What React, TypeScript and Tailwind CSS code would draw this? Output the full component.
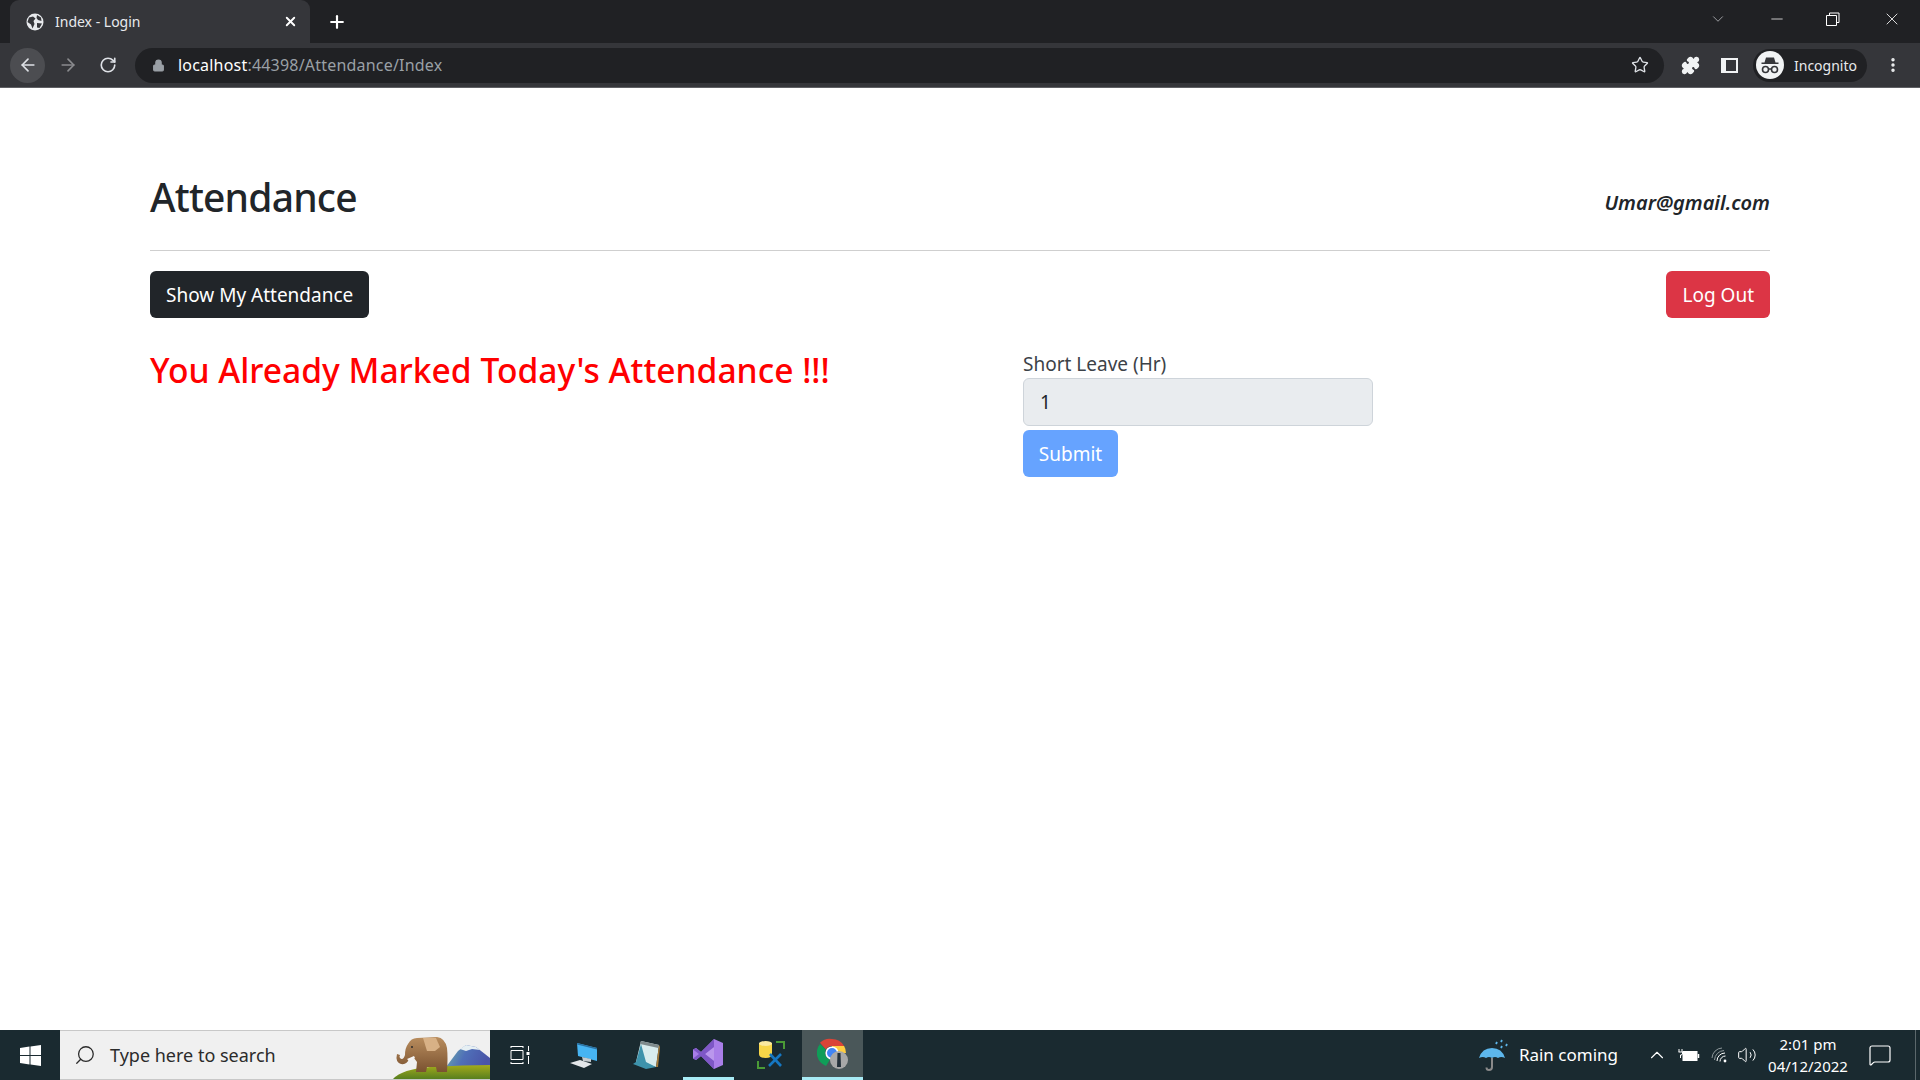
import { ArrowLeft, ArrowRight, ChevronDown, ChevronUp, Lock, Minus, Plus, RotateCw, Search, Star, X, Puzzle, MoreVertical, MessageSquare, Volume2 } from "lucide-react";

const sans = "font-['Noto_Sans','Open_Sans',sans-serif]";

function GlobeIcon() {
  return (
    <svg width="18" height="18" viewBox="0 0 18 18">
      <circle cx="9" cy="9" r="8.5" fill="#e8eaed" />
      <path d="M3 4.5 L7 3.5 L9.5 5.5 L7.5 8 L8.5 11 L6.5 15.5 L5 11.5 L1.5 9 Z" fill="#35363a" />
      <path d="M11 2 L15 4.5 L15.5 8 L12 7 L10.5 5 Z M11 10 L16 10.5 L13.5 15 L11 14.5 Z" fill="#35363a" />
    </svg>
  );
}

function IncognitoIcon() {
  return (
    <svg width="28" height="28" viewBox="0 0 28 28">
      <circle cx="14" cy="14" r="14" fill="#f1f3f4" />
      <path d="M10 6.5 H18 L19.5 11.5 H22.5 V13 H5.5 V11.5 H8.5 Z" fill="#35363a" />
      <circle cx="9.5" cy="18.5" r="3" fill="none" stroke="#35363a" strokeWidth="1.6" />
      <circle cx="18.5" cy="18.5" r="3" fill="none" stroke="#35363a" strokeWidth="1.6" />
      <path d="M12.5 18 H15.5" stroke="#35363a" strokeWidth="1.5" />
    </svg>
  );
}

function WindowsLogo() {
  return (
    <svg width="21" height="21" viewBox="0 0 21 21" fill="#ffffff">
      <path d="M0 3 L9.5 1.6 V10 H0 Z M10.5 1.4 L21 0 V10 H10.5 Z M0 11 H9.5 V19.4 L0 18 Z M10.5 11 H21 V21 L10.5 19.6 Z" />
    </svg>
  );
}

function ElephantArt() {
  return (
    <svg width="100" height="48" viewBox="0 0 100 48" className="shrink-0">
      <defs>
        <linearGradient id="mount" x1="0" y1="0" x2="1" y2="0.3">
          <stop offset="0" stopColor="#6fb0a8" />
          <stop offset="0.5" stopColor="#4f6fb8" />
          <stop offset="1" stopColor="#4a55a8" />
        </linearGradient>
        <linearGradient id="hill" x1="0" y1="0" x2="0" y2="1">
          <stop offset="0" stopColor="#a4ab1c" />
          <stop offset="1" stopColor="#587f1e" />
        </linearGradient>
        <linearGradient id="body" x1="0" y1="0" x2="0" y2="1">
          <stop offset="0" stopColor="#b98d5e" />
          <stop offset="1" stopColor="#7a5230" />
        </linearGradient>
      </defs>
      <path d="M56 36 L68 20 L76 14 L86 16 L100 27 V40 H56 Z" fill="url(#mount)" />
      <path d="M70 18 L76 14 L86 16 L90 19 L82 18 L76 20 Z" fill="#e6eff3" />
      <path d="M3 48 Q12 38 40 36 Q75 34 100 34 V48 Z" fill="url(#hill)" />
      <path d="M27 7 Q21 7 18 13 Q15 17 15 24 Q13 30 10 27 Q9 26 10 24 L7 23 Q5 31 11 33 Q17 34 19 28 L24 27 L27 31 L26 41 H36 L37 36 H46 L47 41 H57 Q58 26 57 17 Q55 7 47 6 Z" fill="url(#body)" />
      <path d="M33 7 H46 L50 16 L45 20 H37 Z" fill="#d8b186" />
      <path d="M17 28 L24 25 L25 27 L19 30 Z" fill="#f5f5f5" />
      <circle cx="22" cy="16" r="1" fill="#2b2b2b" />
    </svg>
  );
}

function TaskViewIcon() {
  return (
    <svg width="20" height="20" viewBox="0 0 20 20" fill="none" stroke="#ffffff" strokeWidth="1">
      <path d="M1 1.5 H13 M1 18.5 H13 M3 5.5 H13 V14.5 H1 V5.5 H3 M1 1 V3 M13 1 V3 M1 17 V19 M13 17 V19" />
      <path d="M18.5 1 V6 M18.5 11 V19" />
      <rect x="16.5" y="7" width="3" height="3" fill="#ffffff" stroke="none" />
    </svg>
  );
}

function PcIcon() {
  return (
    <svg width="30" height="28" viewBox="0 0 30 28">
      <path d="M8 2 L28 7 V20 L9 15 Z" fill="#47b4f2" />
      <path d="M8 2 L28 7 V8.5 L8 3.5 Z" fill="#2b6f9e" />
      <path d="M13 16 L22 18 V21 L14 20 Z" fill="#c7ccd0" />
      <path d="M1 22 L11 19 L23 23 L15 27 Z" fill="#e4e7ea" />
    </svg>
  );
}

function NotepadIcon() {
  return (
    <svg width="28" height="30" viewBox="0 0 28 30">
      <path d="M9 1 L27 5 L24 27 L4 22 Z" fill="#d8ecee" />
      <path d="M9 1 L27 5 L26.4 8 L8 4 Z" fill="#7e8a8c" />
      <path d="M24 27 L27 5 L28 7 L26 27 Z" fill="#a67c3c" />
      <path d="M9 4 L4 22 L1 24 L14 29 L24 27 L14 22 Z" fill="#3e93ac" />
    </svg>
  );
}

function VsIcon() {
  return (
    <svg width="30" height="30" viewBox="0 0 30 30">
      <path d="M21 0 L30 4 V26 L21 30 L8 17 L3 21 L0 19.5 V10.5 L3 9 L8 13 Z" fill="#a97ee8" />
      <path d="M21 8 V22 L12 15 Z" fill="#ffffff" fillOpacity="0.2" />
      <path d="M21 0 L8 13 L3 9 L0 10.5 L6 15 L0 19.5 L3 21 L8 17 L21 30 V22 L12 15 L21 8 Z" fill="#7e57c6" />
    </svg>
  );
}

function SqlIcon() {
  return (
    <svg width="30" height="30" viewBox="0 0 30 30">
      <path d="M3 3 H16 V14 Q16 18 9.5 18 Q3 18 3 14 Z" fill="#f8d648" />
      <ellipse cx="9.5" cy="3.5" rx="6.5" ry="2.5" fill="#fbeaa0" />
      <path d="M20 2 H28 V9 M2 21 V28 H9" fill="none" stroke="#4a9a36" strokeWidth="2" />
      <path d="M13 26 L25 14 M14 14 L25 26" stroke="#1577c2" strokeWidth="2.6" />
    </svg>
  );
}

function ChromeIcon() {
  return (
    <svg width="32" height="32" viewBox="0 0 32 32">
      <path d="M15 1 A14 14 0 0 1 27.1 8 H15 A7 7 0 0 0 8.9 11.5 L3 4.8 A14 14 0 0 1 15 1 Z" fill="#db4437" />
      <path d="M3 6 L8.9 11.5 A7 7 0 0 0 13 21.6 L9 28 A14 14 0 0 1 3 6 Z" fill="#0f9d58" />
      <path d="M15 8 H27.1 A14 14 0 0 1 29 15 L15 15 Z" fill="#ffcd40" />
      <circle cx="15" cy="15" r="5.8" fill="#4285f4" stroke="#ffffff" strokeWidth="1.6" />
      <circle cx="22" cy="22" r="9" fill="#a8a8a8" />
      <path d="M20.5 15 H23.5 L24 29 H20 Z" fill="#24303a" />
    </svg>
  );
}

function RainIcon() {
  return (
    <svg width="32" height="34" viewBox="0 0 32 34">
      <path d="M1 20 Q4 10 14 10 Q24 10 27 20 Q23 18 20 20 Q17 18 14 20 Q11 18 8 20 Q5 18 1 20 Z" fill="#5db7ec" />
      <path d="M14 20 V29 Q14 32 11 32 Q8.5 32 8.5 29.5" fill="none" stroke="#8a8a8a" strokeWidth="2" />
      <path d="M19 4 L18 6 M24 2 L23 4 M24 8 L23 10 M29 6 L28 8" stroke="#5db7ec" strokeWidth="1.8" />
    </svg>
  );
}

function BatteryIcon() {
  return (
    <svg width="22" height="14" viewBox="0 0 22 14" fill="none" stroke="#ffffff">
      <path d="M1 1 V4 M4 1 V4 M0.5 4 H4.5 V6 Q4.5 7 2.5 7 V10" />
      <rect x="5" y="3.5" width="14" height="9" fill="#ffffff" />
      <path d="M20.5 6 V10" strokeWidth="1.5" />
    </svg>
  );
}

function WifiIcon() {
  return (
    <svg width="16" height="16" viewBox="0 0 16 16" fill="none">
      <path d="M1 11 A10.5 10.5 0 0 1 11 1" stroke="#8e989b" strokeWidth="1" />
      <path d="M3.5 13 A10 10 0 0 1 13 3.5" stroke="#8e989b" strokeWidth="1" />
      <path d="M6 14 A8 8 0 0 1 14 6" stroke="#ffffff" strokeWidth="1" />
      <path d="M9 14.5 A5.5 5.5 0 0 1 14.5 9" stroke="#ffffff" strokeWidth="1" />
      <circle cx="14" cy="14" r="1.4" fill="#ffffff" />
    </svg>
  );
}

function TabStrip() {
  return (
    <div className="flex h-[43px] items-center bg-[#202124] pl-[10px] text-[#e8eaed]">
      <div className="flex h-[43px] w-[300px] items-center rounded-t-[9px] bg-[#35363a] pl-[16px] pr-[12px]">
        <GlobeIcon />
        <span className={`ml-[11px] flex-1 text-[14px] ${sans}`}>Index - Login</span>
        <X size={15} strokeWidth={3} className="text-white" />
      </div>
      <Plus size={20} strokeWidth={2.6} className="ml-[17px] text-white" />
      <div className="ml-auto flex items-center pb-[6px]">
        <ChevronDown size={18} strokeWidth={1} className="mr-[41px] text-[#c4c6c9]" />
        <Minus size={18} strokeWidth={1} className="mr-[40px] text-white" />
        <svg width="14" height="14" viewBox="0 0 14 14" fill="none" stroke="#ffffff" className="mr-[42px]">
          <path d="M3.5 3 V1 H13 V10.5 H11 M0.5 3.5 H10.5 V13.5 H0.5 Z" />
        </svg>
        <X size={20} strokeWidth={1} className="mr-[18px] text-white" />
      </div>
    </div>
  );
}

function Toolbar() {
  return (
    <div className="flex h-[45px] items-center border-b border-[#5f6064] bg-[#35363a] pl-[10px] text-[#dee1e6]">
      <div className="flex h-[35px] w-[35px] items-center justify-center rounded-full bg-[#4c4d51]">
        <ArrowLeft size={20} strokeWidth={2} />
      </div>
      <ArrowRight size={20} strokeWidth={2} className="ml-[13px] text-[#8a8b8e]" />
      <RotateCw size={18} strokeWidth={2.2} className="ml-[21px]" />
      <div className="ml-[18px] flex h-[35px] w-[1529px] items-center rounded-full bg-[#202124] pl-[17px] pr-[15px]">
        <Lock size={13} fill="#9aa0a6" className="text-[#9aa0a6]" />
        <span className={`ml-[13px] flex-1 text-[16px] tracking-[0.2px] text-[#9aa0a6] ${sans}`}>
          <span className="text-white">localhost</span>:44398/Attendance/Index
        </span>
        <Star size={18} strokeWidth={1.8} />
      </div>
      <Puzzle size={19} fill="#f1f3f4" className="ml-[17px] text-[#f1f3f4]" />
      <div className="ml-[21px] flex h-[15px] w-[17px] justify-end border-[2px] border-[#f1f3f4] bg-[#f1f3f4]">
        <div className="h-full w-[10px] bg-[#35363a]" />
      </div>
      <div className="ml-[15px] flex h-[33px] w-[114px] items-center rounded-full bg-[#202124] pl-[3px]">
        <IncognitoIcon />
        <span className={`ml-[10px] text-[14px] text-[#e8eaed] ${sans}`}>Incognito</span>
      </div>
      <MoreVertical size={18} strokeWidth={2.6} className="ml-[17px] text-[#f1f3f4]" />
    </div>
  );
}

function Taskbar() {
  return (
    <div className="flex h-[50px] items-center bg-[#1a2a30] text-white">
      <div className="flex h-full w-[60px] items-center justify-center">
        <WindowsLogo />
      </div>
      <div className="flex h-full w-[430px] items-center overflow-hidden border-y border-[#c8c8c8] bg-[#f0f0f0] pl-[14px] text-[#2b2b2b]">
        <Search size={22} strokeWidth={1.4} className="-scale-x-100" />
        <span className={`ml-[14px] flex-1 text-[18px] ${sans}`}>Type here to search</span>
        <ElephantArt />
      </div>
      <div className="ml-[20px] flex h-full items-center">
        <TaskViewIcon />
        <div className="ml-[23px] flex h-full w-[62px] items-center justify-center">
          <PcIcon />
        </div>
        <div className="flex h-full w-[61px] items-center justify-center">
          <NotepadIcon />
        </div>
        <div className="flex h-full w-[64px] justify-center">
          <div className="flex h-full w-[51px] items-center justify-center border-b-[3px] border-[#a8ebf5]">
            <VsIcon />
          </div>
        </div>
        <div className="flex h-full w-[62px] items-center justify-center">
          <SqlIcon />
        </div>
        <div className="flex h-full w-[61px] items-center justify-center border-b-[3px] border-[#a8ebf5] bg-[#4a5759]">
          <ChromeIcon />
        </div>
      </div>
      <div className="ml-auto flex h-full items-center">
        <RainIcon />
        <span className={`ml-[9px] text-[17px] ${sans}`}>Rain coming</span>
        <ChevronUp size={22} strokeWidth={1.2} className="ml-[28px]" />
        <div className="ml-[10px]">
          <BatteryIcon />
        </div>
        <div className="ml-[11px]">
          <WifiIcon />
        </div>
        <Volume2 size={20} strokeWidth={1.2} className="ml-[10px]" />
        <div className={`ml-[8px] flex w-[86px] flex-col items-center text-[15px] leading-[22px] ${sans}`}>
          <span>2:01 pm</span>
          <span>04/12/2022</span>
        </div>
        <MessageSquare size={24} strokeWidth={1.2} className="ml-[17px]" />
        <div className="ml-[23px] h-full w-[5px] border-l border-[#5b676b]" />
      </div>
    </div>
  );
}

export default function App() {
  return (
    <div className={`flex h-[1080px] w-[1920px] flex-col overflow-hidden bg-white ${sans}`}>
      <TabStrip />
      <Toolbar />
      <main className="flex-1 px-[150px] pt-[81px] text-[#212529]">
        <div className="flex items-end justify-between pb-[25px]">
          <h1 className="text-[39px] font-medium leading-[56px] tracking-[-0.8px]">Attendance</h1>
          <span className="pb-[7px] text-[20px] font-semibold italic">Umar@gmail.com</span>
        </div>
        <div className="h-px bg-[#cfcfcf]" />
        <div className="mt-[20px] flex justify-between">
          <button className="h-[47px] rounded-[6px] bg-[#212529] px-[16px] pt-[2px] text-[19px] text-white">Show My Attendance</button>
          <button className="h-[47px] rounded-[6px] bg-[#dc3545] px-[16px] pt-[2px] text-[19px] text-white">Log Out</button>
        </div>
        <div className="mt-[25px] flex">
          <div className="w-[873px]">
            <h2 className="-mt-px text-[33.6px] font-medium leading-[56px] text-[#ff0000]">You Already Marked Today's Attendance !!!</h2>
          </div>
          <div className="flex w-[350px] flex-col pt-[7px]">
            <label className="text-[19px] leading-[28px] text-[#3c4248]">Short Leave (Hr)</label>
            <div className="flex h-[48px] items-center rounded-[6px] border border-[#ced4da] bg-[#e9ecef] px-[16px] text-[19px]">1</div>
            <button className="mt-[4px] h-[47px] w-[95px] rounded-[6px] bg-[#66a3ff] pt-px text-[19px] text-white">Submit</button>
          </div>
        </div>
      </main>
      <Taskbar />
    </div>
  );
}
